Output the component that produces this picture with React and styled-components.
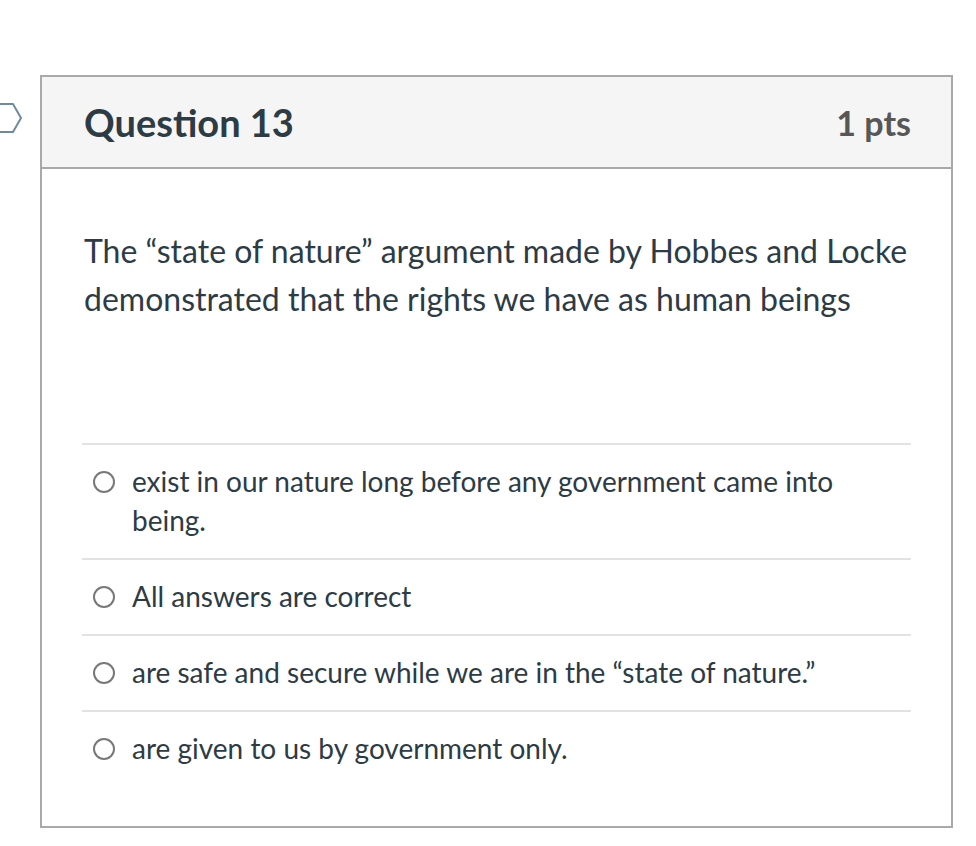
import React from "react";
import styled, { createGlobalStyle } from "styled-components";

const GlobalStyle = createGlobalStyle`
  html, body {
    margin: 0;
    padding: 0;
    background: #ffffff;
  }
  body {
    font-family: "Lato", "Noto Sans", sans-serif;
    color: #2d3b45;
  }
`;

const Page = styled.div`
  display: flex;
  align-items: flex-start;
  padding-top: 75px;
  width: 976px;
  height: 846px;
  box-sizing: border-box;
`;

const MarkerColumn = styled.div`
  width: 40px;
  padding-top: 28px;
  display: flex;
`;

const Card = styled.div`
  width: 913px;
  box-sizing: border-box;
  border: 2px solid #a9a9a9;
  background: #ffffff;
`;

const Header = styled.div`
  display: flex;
  align-items: center;
  justify-content: space-between;
  height: 90px;
  padding: 0 40px 0 42px;
  background: #f5f5f5;
  border-bottom: 2px solid #a9a9a9;
`;

const Title = styled.h2`
  margin: 0;
  font-size: 38px;
  font-weight: 700;
  color: #2d3b45;
`;

const Points = styled.div`
  font-size: 34px;
  font-weight: 700;
  color: #575757;
`;

const Body = styled.div`
  padding: 58px 40px 40px 40px;
`;

const QuestionText = styled.p`
  margin: 0 0 120px 2px;
  font-size: 32px;
  line-height: 48px;
  color: #2d3b45;
`;

const Answers = styled.div`
  display: flex;
  flex-direction: column;
`;

const AnswerRow = styled.label`
  display: flex;
  align-items: flex-start;
  padding: 17px 0 18px 0;
  border-top: 2px solid #e2e2e2;
`;

const Radio = styled.span`
  flex: none;
  width: 22px;
  height: 22px;
  margin: 9px 17px 0 11px;
  border: 2px solid #787878;
  border-radius: 50%;
  box-sizing: border-box;
`;

const AnswerText = styled.span`
  font-size: 28px;
  line-height: 39px;
  color: #2d3b45;
`;

const answers = [
  "exist in our nature long before any government came into being.",
  "All answers are correct",
  "are safe and secure while we are in the \u201cstate of nature.\u201d",
  "are given to us by government only.",
];

const Marker = () => (
  <svg width="24" height="30" viewBox="0 0 24 30">
    <path
      d="M-2 1 H13 L21 15 L13 29 H-2"
      fill="none"
      stroke="#6d8aa2"
      strokeWidth="2"
      strokeLinejoin="round"
    />
  </svg>
);

export default function App() {
  return (
    <>
      <GlobalStyle />
      <Page>
        <MarkerColumn>
          <Marker />
        </MarkerColumn>
        <Card>
          <Header>
            <Title>Question 13</Title>
            <Points>1 pts</Points>
          </Header>
          <Body>
            <QuestionText>
              The {"\u201c"}state of nature{"\u201d"} argument made by Hobbes and
              Locke demonstrated that the rights we have as human beings
            </QuestionText>
            <Answers>
              {answers.map((a, i) => (
                <AnswerRow key={i}>
                  <Radio />
                  <AnswerText>{a}</AnswerText>
                </AnswerRow>
              ))}
            </Answers>
          </Body>
        </Card>
      </Page>
    </>
  );
}
